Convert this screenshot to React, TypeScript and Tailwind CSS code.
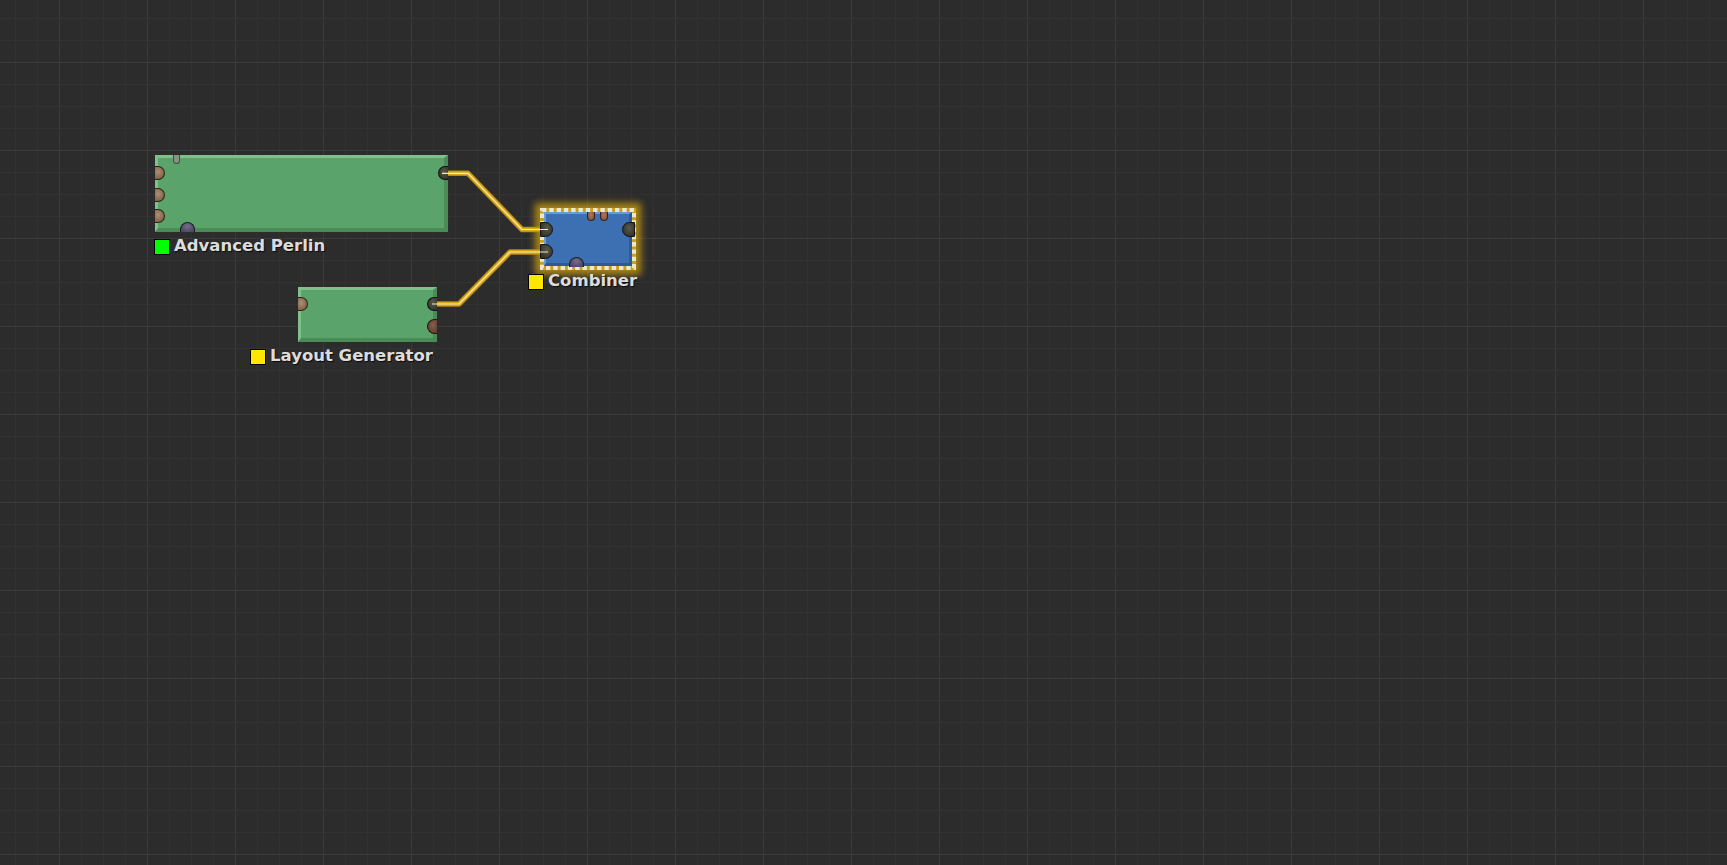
import { clsx } from "clsx";

// port looks, reused across the three nodes
const brownPort =
  "bg-[radial-gradient(ellipse_at_35%_40%,#ad9074_0%,#7d6149_75%)] border border-[#2d2218]";
const darkPort =
  "bg-[radial-gradient(ellipse_at_55%_40%,#5a594c_0%,#34332b_80%)] border border-[#121210]";
const purplePort =
  "bg-[radial-gradient(ellipse_at_50%_35%,#756e8a_0%,#4d4763_80%)] border border-[#201d2a]";
const rustPort =
  "bg-[radial-gradient(ellipse_at_55%_40%,#86604c_0%,#5e3f31_80%)] border border-[#24160f]";
const dropPort =
  "bg-[radial-gradient(ellipse_at_50%_35%,#b07a60_0%,#83523e_80%)] border border-[#3a2218]";

const greenNode =
  "absolute bg-[#5aa36a] border-t-[3px] border-l-[3px] border-b-[4px] border-r-[4px] border-t-[#80c18b] border-l-[#80c18b] border-b-[#4a8b58] border-r-[#4a8b58]";

function Port({ className }: { className: string }) {
  return <span className={clsx("absolute block", className)} />;
}

function Label({ className, swatch, text }: { className: string; swatch: string; text: string }) {
  return (
    <div className={clsx("absolute flex items-center gap-1", className)}>
      <span className={clsx("block w-4 h-4 shrink-0 border-[1.5px] border-black", swatch)} />
      <span className="mb-[2px] font-['DejaVu_Sans',sans-serif] font-bold text-[16.5px] leading-none whitespace-nowrap text-[#dcdcdc] [text-shadow:1px_1px_1px_rgba(0,0,0,0.75)]">
        {text}
      </span>
    </div>
  );
}

function Wires() {
  return (
    <svg className="absolute inset-0 w-full h-full pointer-events-none" viewBox="0 0 1727 865">
      <g fill="none" strokeLinejoin="round">
        <path d="M448 173.3 L468 173.3 L522 229.5 L540 229.5" stroke="#b88a0c" strokeWidth="5.5" />
        <path d="M448 173.3 L468 173.3 L522 229.5 L540 229.5" stroke="#dcaa18" strokeWidth="3.5" />
        <path d="M442 173.3 L468 173.3 L522 229.5 L548 229.5" stroke="#f6e9b4" strokeWidth="1.2" />
        <path d="M437 304 L459 304 L510 252 L540 252" stroke="#b88a0c" strokeWidth="5.5" />
        <path d="M437 304 L459 304 L510 252 L540 252" stroke="#dcaa18" strokeWidth="3.5" />
        <path d="M432 304 L459 304 L510 252 L548 252" stroke="#f6e9b4" strokeWidth="1.2" />
      </g>
    </svg>
  );
}

export default function App() {
  return (
    <div className="relative w-full h-screen overflow-hidden bg-[#2c2c2c] [background-image:linear-gradient(to_right,#3a3a3a_1px,transparent_1px),linear-gradient(to_bottom,#3a3a3a_1px,transparent_1px),linear-gradient(to_right,#323232_1px,transparent_1px),linear-gradient(to_bottom,#323232_1px,transparent_1px)] [background-size:88px_88px,88px_88px,22px_22px,22px_22px] [background-position:59px_0,0_62px,15px_0,0_18px]">
      {/* Advanced Perlin */}
      <div className={clsx(greenNode, "left-[155px] top-[155px] w-[293px] h-[77px]")}>
        <Port className={clsx(brownPort, "left-[-3px] top-[8px] w-[10px] h-[14px] rounded-r-full border-l-0")} />
        <Port className={clsx(brownPort, "left-[-3px] top-[30px] w-[10px] h-[14px] rounded-r-full border-l-0")} />
        <Port className={clsx(brownPort, "left-[-3px] top-[51px] w-[10px] h-[14px] rounded-r-full border-l-0")} />
        <Port className="left-[15px] top-[-3px] w-[7px] h-[9px] rounded-b-full bg-[#87937f] border border-t-0 border-[#454d40]" />
        <Port className={clsx(purplePort, "left-[22px] top-[64px] w-[15px] h-[10px] rounded-t-full border-b-0")} />
        <Port className={clsx(darkPort, "right-[-4px] top-[8px] w-[10px] h-[14px] rounded-l-full border-r-0")} />
      </div>
      <Label className="left-[154px] top-[238px]" swatch="bg-[#00ff00]" text="Advanced Perlin" />

      {/* Layout Generator */}
      <div className={clsx(greenNode, "left-[298px] top-[287px] w-[139px] h-[55px]")}>
        <Port className={clsx(brownPort, "left-[-3px] top-[7px] w-[10px] h-[14px] rounded-r-full border-l-0")} />
        <Port className={clsx(darkPort, "right-[-4px] top-[7px] w-[10px] h-[14px] rounded-l-full border-r-0")} />
        <Port className={clsx(rustPort, "right-[-4px] top-[29px] w-[10px] h-[15px] rounded-l-full border-r-0")} />
      </div>
      <Label className="left-[250px] top-[348px]" swatch="bg-[#ffe600]" text="Layout Generator" />

      {/* Combiner (selected) */}
      <div className="absolute left-[540px] top-[208px] w-[96px] h-[62px] p-[4px] bg-[#c9a01a] shadow-[0_0_7px_5px_rgba(200,156,18,0.8)]">
        <div className="w-full h-full bg-[#3d70b2] border-t-[2px] border-l-[2px] border-b-[3px] border-r-[3px] border-t-[#6a9bd6] border-l-[#6a9bd6] border-b-[#2d5a93] border-r-[#2d5a93]" />
        <svg className="absolute inset-0 w-full h-full" viewBox="0 0 96 62">
          <rect x="2" y="2" width="92" height="58" fill="none" stroke="#ece7d2" strokeWidth="4" strokeDasharray="4.4 2.9" />
        </svg>
        <Port className={clsx(darkPort, "left-0 top-[14px] w-[13px] h-[15px] rounded-r-full")} />
        <Port className={clsx(darkPort, "left-0 top-[36px] w-[13px] h-[15px] rounded-r-full")} />
        <Port className={clsx(darkPort, "left-[82px] top-[14px] w-[13px] h-[15px] rounded-l-full")} />
        <Port className={clsx(dropPort, "left-[47px] top-[4px] w-[8px] h-[9px] rounded-b-full border-t-0")} />
        <Port className={clsx(dropPort, "left-[60px] top-[4px] w-[8px] h-[9px] rounded-b-full border-t-0")} />
        <Port className={clsx(purplePort, "left-[29px] top-[49px] w-[15px] h-[10px] rounded-t-full border-b-0")} />
      </div>
      <Label className="left-[528px] top-[273px]" swatch="bg-[#ffe600]" text="Combiner" />

      <Wires />
    </div>
  );
}
